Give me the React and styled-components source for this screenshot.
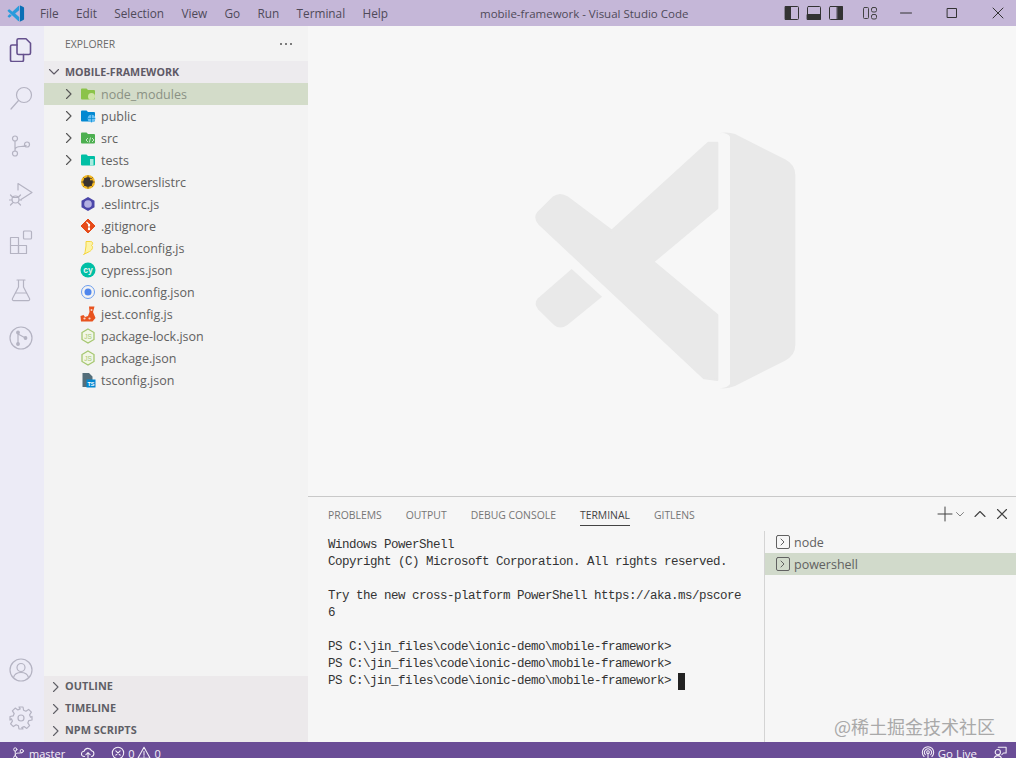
import React from "react";
import styled, { createGlobalStyle } from "styled-components";

const GlobalStyle = createGlobalStyle`
  html, body {
    margin: 0;
    height: 100%;
    overflow: hidden;
    background: #f7f7f7;
  }
  #root {
    height: 100%;
  }
`;

const VSCodeMark = ({ size, width, height, arm, panel }) => (
  <svg width={width || size} height={height || size} viewBox="0 0 900 840">
    <path
      d="M622 68 L595 68 L305 332 L172 232 Q150 218 130 232 L84 278 Q72 295 88 312 L582 775 L622 780 L622 585 L430 425 L622 265 Z"
      fill={arm}
      stroke={arm}
      strokeWidth="6"
      strokeLinejoin="round"
    />
    <path
      d="M185 447 L276 530 L172 615 Q150 630 132 615 L84 568 Q70 550 84 535 Z"
      fill={arm}
    />
    <path
      d="M660 50 Q650 36 628 40 Q650 34 675 42 L825 118 Q856 134 856 165 L856 675 Q856 706 825 722 L675 798 Q650 808 628 804 Q650 806 660 792 Z"
      fill={panel}
    />
  </svg>
);

const Ico = ({ size = 24, box = 24, sw = 1.2, color = "currentColor", children }) => (
  <svg
    width={size}
    height={size}
    viewBox={`0 0 ${box} ${box}`}
    fill="none"
    stroke={color}
    strokeWidth={sw}
    strokeLinecap="round"
    strokeLinejoin="round"
  >
    {children}
  </svg>
);

const Chevron = ({ open }) => (
  <Ico size={16} box={16} sw={1.1}>
    {open ? <path d="M3.5 5.5 8 10l4.5-4.5" /> : <path d="M5.5 3.5 10 8l-4.5 4.5" />}
  </Ico>
);

const activityTop = [
  {
    key: "files",
    active: true,
    sw: 1.6,
    draw: (
      <>
        <path d="M9.500.8h7.500l4.500 4.500v9.700a1.500 1.500 0 0 1-1.500 1.500H9.500A1.500 1.500 0 0 1 8 15V2.300A1.500 1.500 0 0 1 9.500.8Z" />
        <path d="M8 7H3a1.500 1.500 0 0 0-1.500 1.500v13.500A1.500 1.500 0 0 0 3 23.500h10a1.500 1.500 0 0 0 1.500-1.500v-5.500" />
      </>
    ),
  },
  {
    key: "search",
    draw: (
      <>
        <circle cx="15" cy="9" r="7.500" />
        <path d="M9.500 14.500 2 23" />
      </>
    ),
  },
  {
    key: "git",
    draw: (
      <>
        <circle cx="6" cy="4.500" r="2.500" />
        <circle cx="6" cy="19.500" r="2.500" />
        <circle cx="18" cy="10.500" r="2.500" />
        <path d="M6 7v10M6 16c0-3 2-3.500 6-3.500 3 0 4.500-.500 5-1" />
      </>
    ),
  },
  {
    key: "debug",
    draw: (
      <>
        <path d="M9 8V1.500L23 10.500 12 17.500" />
        <circle cx="6.500" cy="17.500" r="3.500" />
        <path d="M3.500 15 1.500 13M9.500 15l2-2M3 18H.5M10 18h2.500M3.500 21l-2 2M9.500 21l2 2M3.500 15.500h6" />
      </>
    ),
  },
  {
    key: "extensions",
    draw: (
      <>
        <rect x="1.500" y="7.500" width="8" height="8" />
        <rect x="1.500" y="15.500" width="8" height="8" />
        <rect x="9.500" y="15.500" width="8" height="8" />
        <rect x="14.500" y="1" width="8" height="8" rx="1" />
      </>
    ),
  },
  {
    key: "testing",
    draw: (
      <>
        <path d="M8 2h8M9.500 2v7L3.500 20.500a1.500 1.500 0 0 0 1.300 2.200h14.400a1.500 1.500 0 0 0 1.300-2.200L14.500 9V2" />
        <path d="M6.500 15h11" />
      </>
    ),
  },
  {
    key: "gitlens",
    draw: (
      <>
        <circle cx="12" cy="12" r="11" />
        <circle cx="9" cy="6.500" r="1.300" fill="currentColor" />
        <circle cx="9" cy="18" r="1.300" fill="currentColor" />
        <circle cx="16.500" cy="12" r="1.300" fill="currentColor" />
        <path d="M9 7v10.500M9 8l6.500 3.500" />
      </>
    ),
  },
];

const activityBottom = [
  {
    key: "account",
    draw: (
      <>
        <circle cx="12" cy="12" r="11" />
        <circle cx="12" cy="9.500" r="4" />
        <path d="M4.500 19.500c1-3.500 4-5 7.500-5s6.500 1.500 7.500 5" />
      </>
    ),
  },
  {
    key: "settings",
    draw: (
      <>
        <circle cx="12" cy="12" r="3" />
        <path d="M10 1h4l.6 3.200 2.300 1 2.700-1.800 2.800 2.800-1.800 2.700 1 2.300L23 10.500v3.500l-3.200.6-1 2.300 1.800 2.700-2.800 2.800-2.700-1.800-2.300 1L14 23h-4l-.6-3.200-2.300-1-2.700 1.800-2.800-2.800 1.800-2.700-1-2.300L1 14v-3.500l3.200-.6 1-2.300-1.800-2.700 2.800-2.800 2.700 1.800 2.300-1Z" />
      </>
    ),
  },
];

const FolderGlyph = ({ color, children }) => (
  <svg width="16" height="16" viewBox="0 0 16 16">
    <path d="M1 3.500A1 1 0 0 1 2 2.500h4.500L8 4h6a1 1 0 0 1 1 1v7.500a1 1 0 0 1-1 1H2a1 1 0 0 1-1-1Z" fill={color} />
    {children}
  </svg>
);

const FileGlyph = ({ children }) => (
  <svg width="16" height="16" viewBox="0 0 16 16">
    {children}
  </svg>
);

const NodeHex = () => (
  <FileGlyph>
    <path d="M8 1 14 4.500v7L8 15 2 11.500v-7Z" fill="#f2f6e6" stroke="#a5c770" strokeWidth="1.300" />
    <text x="8" y="10.500" textAnchor="middle" fontSize="6.500" fontFamily="Liberation Sans, sans-serif" fill="#a5c770">JS</text>
  </FileGlyph>
);

const tree = [
  {
    name: "node_modules",
    folder: true,
    selected: true,
    icon: (
      <FolderGlyph color="#8bc34a">
        <circle cx="11.500" cy="10.500" r="3.500" fill="#cfe3a8" />
      </FolderGlyph>
    ),
  },
  {
    name: "public",
    folder: true,
    icon: (
      <FolderGlyph color="#0288d1">
        <circle cx="11.500" cy="10.500" r="3.800" fill="#6bc1f2" />
        <path d="M7.800 10.500h7.400M11.500 6.700v7.600" stroke="#0288d1" strokeWidth=".7" />
      </FolderGlyph>
    ),
  },
  {
    name: "src",
    folder: true,
    icon: (
      <FolderGlyph color="#4caf50">
        <path d="m8 8-2 2 2 2M10.500 7.500l-1.200 5M12 8l2 2-2 2" stroke="#c8e6c9" strokeWidth="1" fill="none" />
      </FolderGlyph>
    ),
  },
  {
    name: "tests",
    folder: true,
    icon: (
      <FolderGlyph color="#00bfa5">
        <rect x="10" y="7" width="3.500" height="6.500" fill="#a7ece0" />
      </FolderGlyph>
    ),
  },
  {
    name: ".browserslistrc",
    icon: (
      <FileGlyph>
        <circle cx="8" cy="8" r="7" fill="#f5b921" />
        <circle cx="8" cy="8" r="4.800" fill="#3a3330" />
        <path d="M8 1.500v13M1.500 8h13M3.500 3.500l9 9M12.500 3.500l-9 9" stroke="#3a3330" strokeWidth=".8" />
        <circle cx="11" cy="5.500" r="1" fill="#f5b921" />
      </FileGlyph>
    ),
  },
  {
    name: ".eslintrc.js",
    icon: (
      <FileGlyph>
        <path d="M8 1 14.500 4.800v6.400L8 15 1.500 11.200V4.800Z" fill="#4b46a8" />
        <circle cx="8" cy="8" r="3.800" fill="#b3b0e2" />
      </FileGlyph>
    ),
  },
  {
    name: ".gitignore",
    icon: (
      <FileGlyph>
        <path d="M8 1 15 8l-7 7-7-7Z" fill="#e64a19" stroke="#e64a19" strokeLinejoin="round" />
        <path d="M6.500 4 9.500 7M9 7v5" stroke="#fff" strokeWidth="1.100" />
        <circle cx="9" cy="7" r="1.200" fill="#fff" />
        <circle cx="9" cy="11" r="1.200" fill="#fff" />
      </FileGlyph>
    ),
  },
  {
    name: "babel.config.js",
    icon: (
      <FileGlyph>
        <path d="M6 1.500h4.500c2.500 0 2.800 2.500 1 4 2 1 1 4.500-2 6l-6 3c1.200-1 1.500-1.500 1.700-3l.8-5.500Z" fill="#fdf3a6" stroke="#f5d63d" strokeWidth="1" />
      </FileGlyph>
    ),
  },
  {
    name: "cypress.json",
    icon: (
      <FileGlyph>
        <circle cx="8" cy="8" r="7.500" fill="#00bfa5" />
        <text x="8" y="10.500" textAnchor="middle" fontSize="8.500" fontWeight="700" fontFamily="Liberation Sans, sans-serif" fill="#f3f3f3">cy</text>
      </FileGlyph>
    ),
  },
  {
    name: "ionic.config.json",
    icon: (
      <FileGlyph>
        <circle cx="8" cy="8" r="6.500" fill="none" stroke="#6d9eee" strokeWidth="1" />
        <circle cx="8" cy="8" r="3.500" fill="#4f86ec" />
      </FileGlyph>
    ),
  },
  {
    name: "jest.config.js",
    icon: (
      <FileGlyph>
        <path d="M9 .5h5.500L13 6l2.500 6-3 3.500H1L.5 10l3-1 1.500 2 3-1 1.500-4Z" fill="#e8531f" />
        <circle cx="4.500" cy="12.500" r="1.100" fill="#f7d5c6" />
        <circle cx="9.500" cy="12.500" r="1.100" fill="#f7d5c6" />
        <circle cx="11.500" cy="4" r="1" fill="#f7d5c6" />
      </FileGlyph>
    ),
  },
  { name: "package-lock.json", icon: <NodeHex /> },
  { name: "package.json", icon: <NodeHex /> },
  {
    name: "tsconfig.json",
    icon: (
      <FileGlyph>
        <path d="M2.500 1H9l3.500 3.500V8H7v7H2.500Z" fill="#546e7a" />
        <rect x="6.500" y="7.500" width="9" height="8" fill="#0288d1" />
        <text x="11" y="14" textAnchor="middle" fontSize="5.500" fontWeight="700" fontFamily="Liberation Sans, sans-serif" fill="#fff">TS</text>
      </FileGlyph>
    ),
  },
];

const App = () => {
  return (
    <>
      <GlobalStyle />
      <Workbench>
        <TitleBar>
          <LogoSlot>
            <VSCodeMark size={19} arm="#2a9bdc" panel="#0a6fb5" />
          </LogoSlot>
          <MenuBar>
            {["File", "Edit", "Selection", "View", "Go", "Run", "Terminal", "Help"].map((m) => (
              <MenuItem key={m}>{m}</MenuItem>
            ))}
          </MenuBar>
          <WindowTitle>mobile-framework - Visual Studio Code</WindowTitle>
          <LayoutControls>
            <Ico size={16} box={16} sw={1}>
              <rect x="1.500" y="1.500" width="13" height="13" rx="1" />
              <rect x="1.500" y="1.500" width="5" height="13" fill="#333" />
            </Ico>
            <Ico size={16} box={16} sw={1}>
              <rect x="1.500" y="1.500" width="13" height="13" rx="1" />
              <rect x="1.500" y="9.500" width="13" height="5" fill="#333" />
            </Ico>
            <Ico size={16} box={16} sw={1}>
              <rect x="1.500" y="1.500" width="13" height="13" rx="1" />
              <rect x="9.500" y="1.500" width="5" height="13" fill="#333" />
            </Ico>
          </LayoutControls>
          <CustomizeSlot>
            <Ico size={16} box={16} sw={1}>
              <rect x="1.500" y="2.500" width="5" height="11" rx="1" />
              <rect x="9.500" y="2.500" width="5" height="4.500" rx="1.500" />
              <rect x="9.500" y="9.500" width="5" height="4.500" rx="1.500" />
            </Ico>
          </CustomizeSlot>
          <WindowControls>
            <WindowButton>
              <Ico size={12} box={12} sw={1}>
                <path d="M.5 6h11" />
              </Ico>
            </WindowButton>
            <WindowButton>
              <Ico size={12} box={12} sw={1}>
                <rect x="1.500" y="1.500" width="9" height="9" />
              </Ico>
            </WindowButton>
            <WindowButton>
              <Ico size={12} box={12} sw={1}>
                <path d="m1 1 10 10M11 1 1 11" />
              </Ico>
            </WindowButton>
          </WindowControls>
        </TitleBar>

        <Body>
          <ActivityBar>
            <ActivityGroup>
              {activityTop.map((a) => (
                <ActivityItem key={a.key} $active={a.active}>
                  <Ico sw={a.sw}>{a.draw}</Ico>
                </ActivityItem>
              ))}
            </ActivityGroup>
            <ActivityGroup>
              {activityBottom.map((a) => (
                <ActivityItem key={a.key}>
                  <Ico>{a.draw}</Ico>
                </ActivityItem>
              ))}
            </ActivityGroup>
          </ActivityBar>

          <SideBar>
            <SideTitle>
              <span>EXPLORER</span>
              <MoreDots>
                <i />
                <i />
                <i />
              </MoreDots>
            </SideTitle>
            <RootHeader>
              <Chevron open />
              <span>MOBILE-FRAMEWORK</span>
            </RootHeader>
            <Tree>
              {tree.map((item) => (
                <TreeRow key={item.name} $selected={item.selected}>
                  <ChevronSlot>{item.folder && <Chevron />}</ChevronSlot>
                  <IconSlot>{item.icon}</IconSlot>
                  <TreeLabel $selected={item.selected}>{item.name}</TreeLabel>
                </TreeRow>
              ))}
            </Tree>
            <Sections>
              {["OUTLINE", "TIMELINE", "NPM SCRIPTS"].map((s) => (
                <SectionRow key={s}>
                  <Chevron />
                  <SectionLabel>{s}</SectionLabel>
                </SectionRow>
              ))}
            </Sections>
          </SideBar>

          <Main>
            <Editor>
              <VSCodeMark width={300} height={280} arm="#e9e9e9" panel="#e9e9e9" />
            </Editor>
            <Panel>
              <PanelHeader>
                <PanelTabs>
                  {["PROBLEMS", "OUTPUT", "DEBUG CONSOLE", "TERMINAL", "GITLENS"].map((t) => (
                    <PanelTab key={t} $active={t === "TERMINAL"}>
                      {t}
                    </PanelTab>
                  ))}
                </PanelTabs>
                <PanelActions>
                  <Ico size={16} box={16} sw={1}>
                    <path d="M8 1v14M1 8h14" />
                  </Ico>
                  <SmallCaret>
                    <Ico size={10} box={10} sw={0.9} color="#777">
                      <path d="m1.500 3.500 3.500 3.500 3.500-3.500" />
                    </Ico>
                  </SmallCaret>
                  <PanelAction>
                    <Ico size={14} box={14} sw={1.100}>
                      <path d="m2 9.500 5-5 5 5" />
                    </Ico>
                  </PanelAction>
                  <PanelAction>
                    <Ico size={14} box={14} sw={1.100}>
                      <path d="m2.500 2.500 9 9M11.500 2.500l-9 9" />
                    </Ico>
                  </PanelAction>
                </PanelActions>
              </PanelHeader>
              <PanelBody>
                <Terminal>
                  <Line>Windows PowerShell</Line>
                  <Line>Copyright (C) Microsoft Corporation. All rights reserved.</Line>
                  <Line />
                  <Line>Try the new cross-platform PowerShell https://aka.ms/pscore</Line>
                  <Line>6</Line>
                  <Line />
                  <Line>PS C:\jin_files\code\ionic-demo\mobile-framework&gt;</Line>
                  <Line>PS C:\jin_files\code\ionic-demo\mobile-framework&gt;</Line>
                  <Line>
                    PS C:\jin_files\code\ionic-demo\mobile-framework&gt; <Cursor />
                  </Line>
                </Terminal>
                <TerminalList>
                  {["node", "powershell"].map((t) => (
                    <TerminalRow key={t} $selected={t === "powershell"}>
                      <Ico size={16} box={16} sw={1}>
                        <rect x="1.500" y="1.500" width="13" height="13" rx="1.500" />
                        <path d="m6 5 3 3-3 3" />
                      </Ico>
                      <span>{t}</span>
                    </TerminalRow>
                  ))}
                </TerminalList>
              </PanelBody>
            </Panel>
          </Main>
        </Body>

        <StatusBar>
          <StatusGroup>
            <StatusItem $left={12}>
              <Ico size={13} box={16} sw={1.200}>
                <circle cx="4" cy="3" r="2" />
                <circle cx="4" cy="13" r="2" />
                <circle cx="12" cy="5" r="2" />
                <path d="M4 5v6M4 10c0-2 2-2.500 4-2.500s3.500-.500 4-.500" />
              </Ico>
              <span>master</span>
            </StatusItem>
            <StatusItem $left={16}>
              <Ico size={14} box={16} sw={1.200}>
                <path d="M4 12H3.500a3 3 0 0 1 0-6 4.500 4.500 0 0 1 8.500-.500 3.300 3.300 0 0 1 0 6.500H12" />
                <path d="M8 14V8M5.500 10 8 7.500l2.500 2.500" />
              </Ico>
            </StatusItem>
            <StatusItem $left={16} $gap={3}>
              <Ico size={14} box={16} sw={1.200}>
                <circle cx="8" cy="8" r="6.500" />
                <path d="m5.500 5.500 5 5M10.500 5.500l-5 5" />
              </Ico>
              <span>0</span>
              <Ico size={14} box={16} sw={1.200}>
                <path d="M8 1.500 15 14H1ZM8 6v4.500M8 12v.5" />
              </Ico>
              <span>0</span>
            </StatusItem>
          </StatusGroup>
          <StatusGroup>
            <StatusItem $size={11.5} $gap={3}>
              <Ico size={14} box={16} sw={1.200}>
                <circle cx="8" cy="7" r="1.500" />
                <path d="M5 10a4 4 0 1 1 6 0M3.500 12a6.500 6.500 0 1 1 9 0M8 9v6" />
              </Ico>
              <span>Go Live</span>
            </StatusItem>
            <StatusItem $left={16} $right={9}>
              <Ico size={14} box={16} sw={1.200}>
                <circle cx="5.500" cy="7" r="3" />
                <path d="M1 15c.5-2.500 2.200-4 4.500-4s4 1.500 4.500 4M6 1.500h9V8h-3l-2 2" />
              </Ico>
            </StatusItem>
          </StatusGroup>
        </StatusBar>

        <Watermark>@稀土掘金技术社区</Watermark>
      </Workbench>
    </>
  );
};

export default App;

const Workbench = styled.div`
  position: relative;
  display: grid;
  grid-template-rows: 26px 716px 16px;
  height: 758px;
  overflow: hidden;
  font-family: "Open Sans", "Noto Sans", sans-serif;
  font-size: 12px;
  color: #616161;
`;

const TitleBar = styled.header`
  position: relative;
  display: flex;
  align-items: center;
  background: #c5b7d8;
  color: #4f4a58;
`;

const LogoSlot = styled.div`
  display: flex;
  width: 40px;
  padding-left: 6px;
  box-sizing: border-box;
`;

const MenuBar = styled.nav`
  display: flex;
  gap: 17.300px;
`;

const MenuItem = styled.span`
  font-size: 11.800px;
`;

const WindowTitle = styled.div`
  position: absolute;
  left: 480px;
  white-space: nowrap;
  font-size: 11.500px;
`;

const LayoutControls = styled.div`
  display: flex;
  gap: 6px;
  margin-left: auto;
  color: #333;
`;

const CustomizeSlot = styled.div`
  display: flex;
  margin-left: 18px;
  color: #444;
`;

const WindowControls = styled.div`
  display: flex;
  margin: 0 -5px 0 5px;
  color: #333;
`;

const WindowButton = styled.div`
  display: flex;
  justify-content: center;
  align-items: center;
  width: 46px;
`;

const Body = styled.div`
  display: flex;
  min-height: 0;
`;

const ActivityBar = styled.aside`
  display: flex;
  flex-direction: column;
  justify-content: space-between;
  flex: 0 0 44px;
  background: #ecebf6;
`;

const ActivityGroup = styled.div`
  display: flex;
  flex-direction: column;
`;

const ActivityItem = styled.div`
  display: flex;
  justify-content: center;
  align-items: center;
  width: 42px;
  height: 48px;
  color: ${(p) => (p.$active ? "#65508d" : "#b4b3c2")};
`;

const SideBar = styled.section`
  display: flex;
  flex-direction: column;
  flex: 0 0 264px;
  background: #f3f3f3;
`;

const SideTitle = styled.div`
  display: flex;
  justify-content: space-between;
  align-items: center;
  height: 35px;
  padding: 0 16px 0 21px;
  font-size: 10.400px;
  color: #6a6a6a;
`;

const MoreDots = styled.div`
  display: flex;
  gap: 3px;

  i {
    width: 2px;
    height: 2px;
    border-radius: 50%;
    background: #555;
  }
`;

const RootHeader = styled.div`
  display: flex;
  align-items: center;
  gap: 3px;
  height: 22px;
  padding-left: 2px;
  background: #edebee;
  font-size: 10.700px;
  font-weight: 700;
  color: #5f5a66;
`;

const Tree = styled.div`
  display: flex;
  flex-direction: column;
  flex: 1;
`;

const TreeRow = styled.div`
  display: flex;
  align-items: center;
  height: 22px;
  padding-left: 17px;
  background: ${(p) => (p.$selected ? "#d3dcc9" : "transparent")};
`;

const ChevronSlot = styled.div`
  display: flex;
  width: 19px;
  color: #555;
`;

const IconSlot = styled.div`
  display: flex;
  width: 21px;
`;

const TreeLabel = styled.span`
  font-size: 12.500px;
  color: ${(p) => (p.$selected ? "#8a9184" : "#616161")};
`;

const Sections = styled.div`
  display: flex;
  flex-direction: column;
  background: #ece9eb;
`;

const SectionRow = styled.div`
  display: flex;
  align-items: center;
  gap: 1px;
  height: 22px;
  padding-left: 4px;
  font-size: 10.900px;
  font-weight: 700;
  color: #5f5f66;
`;

const SectionLabel = styled.span`
  line-height: 20px;
  padding-bottom: 2px;
`;

const Main = styled.main`
  display: flex;
  flex-direction: column;
  flex: 1;
  min-width: 0;
`;

const Editor = styled.div`
  display: flex;
  justify-content: center;
  align-items: center;
  flex: 1;
  padding: 0 4px 2px 0;
  background: #f7f7f7;
`;

const Panel = styled.section`
  display: flex;
  flex-direction: column;
  flex: 0 0 246px;
  box-sizing: border-box;
  border-top: 1px solid #c9c9c9;
  background: #f6f6f6;
`;

const PanelHeader = styled.div`
  display: flex;
  justify-content: space-between;
  align-items: flex-start;
  flex: 0 0 34px;
  padding: 0 7px 0 20px;
`;

const PanelTabs = styled.div`
  display: flex;
  gap: 24px;
`;

const PanelTab = styled.div`
  height: 28px;
  line-height: 36px;
  font-size: 10.400px;
  color: ${(p) => (p.$active ? "#444" : "#757575")};
  border-bottom: 1px solid ${(p) => (p.$active ? "#444" : "transparent")};
`;

const PanelActions = styled.div`
  display: flex;
  align-items: center;
  height: 34px;
  color: #424242;
`;

const SmallCaret = styled.div`
  display: flex;
  margin-left: 2px;
`;

const PanelAction = styled.div`
  display: flex;
  margin-left: 8px;
`;

const PanelBody = styled.div`
  display: flex;
  flex: 1;
  min-height: 0;
`;

const Terminal = styled.div`
  flex: 1;
  padding: 6px 0 0 20px;
  font-family: "Liberation Mono", monospace;
  font-size: 12.500px;
  letter-spacing: -0.500px;
  color: #333;
`;

const Line = styled.div`
  height: 17px;
  line-height: 17px;
  white-space: pre;
`;

const Cursor = styled.span`
  display: inline-block;
  width: 7px;
  height: 17px;
  vertical-align: top;
  background: #222;
`;

const TerminalList = styled.div`
  flex: 0 0 251px;
  border-left: 1px solid #d4d4d4;
`;

const TerminalRow = styled.div`
  display: flex;
  align-items: center;
  gap: 3px;
  height: 22px;
  padding-left: 10px;
  font-size: 12.500px;
  color: #616161;
  background: ${(p) => (p.$selected ? "#d1dacb" : "transparent")};
`;

const StatusBar = styled.footer`
  display: flex;
  justify-content: space-between;
  align-items: flex-start;
  height: 16px;
  overflow: hidden;
  background: #6a4d96;
  color: #f4f0f8;
`;

const StatusGroup = styled.div`
  display: flex;
  align-items: center;
  height: 22px;
`;

const StatusItem = styled.div`
  display: flex;
  align-items: center;
  gap: ${(p) => p.$gap || 4}px;
  margin-left: ${(p) => p.$left || 0}px;
  margin-right: ${(p) => p.$right || 0}px;
  font-size: ${(p) => p.$size || 11}px;
`;

const Watermark = styled.div`
  position: absolute;
  left: 834px;
  top: 714px;
  font-family: "Noto Sans CJK SC", sans-serif;
  font-size: 18px;
  line-height: 24px;
  white-space: nowrap;
  color: #a9a9a9;
`;
